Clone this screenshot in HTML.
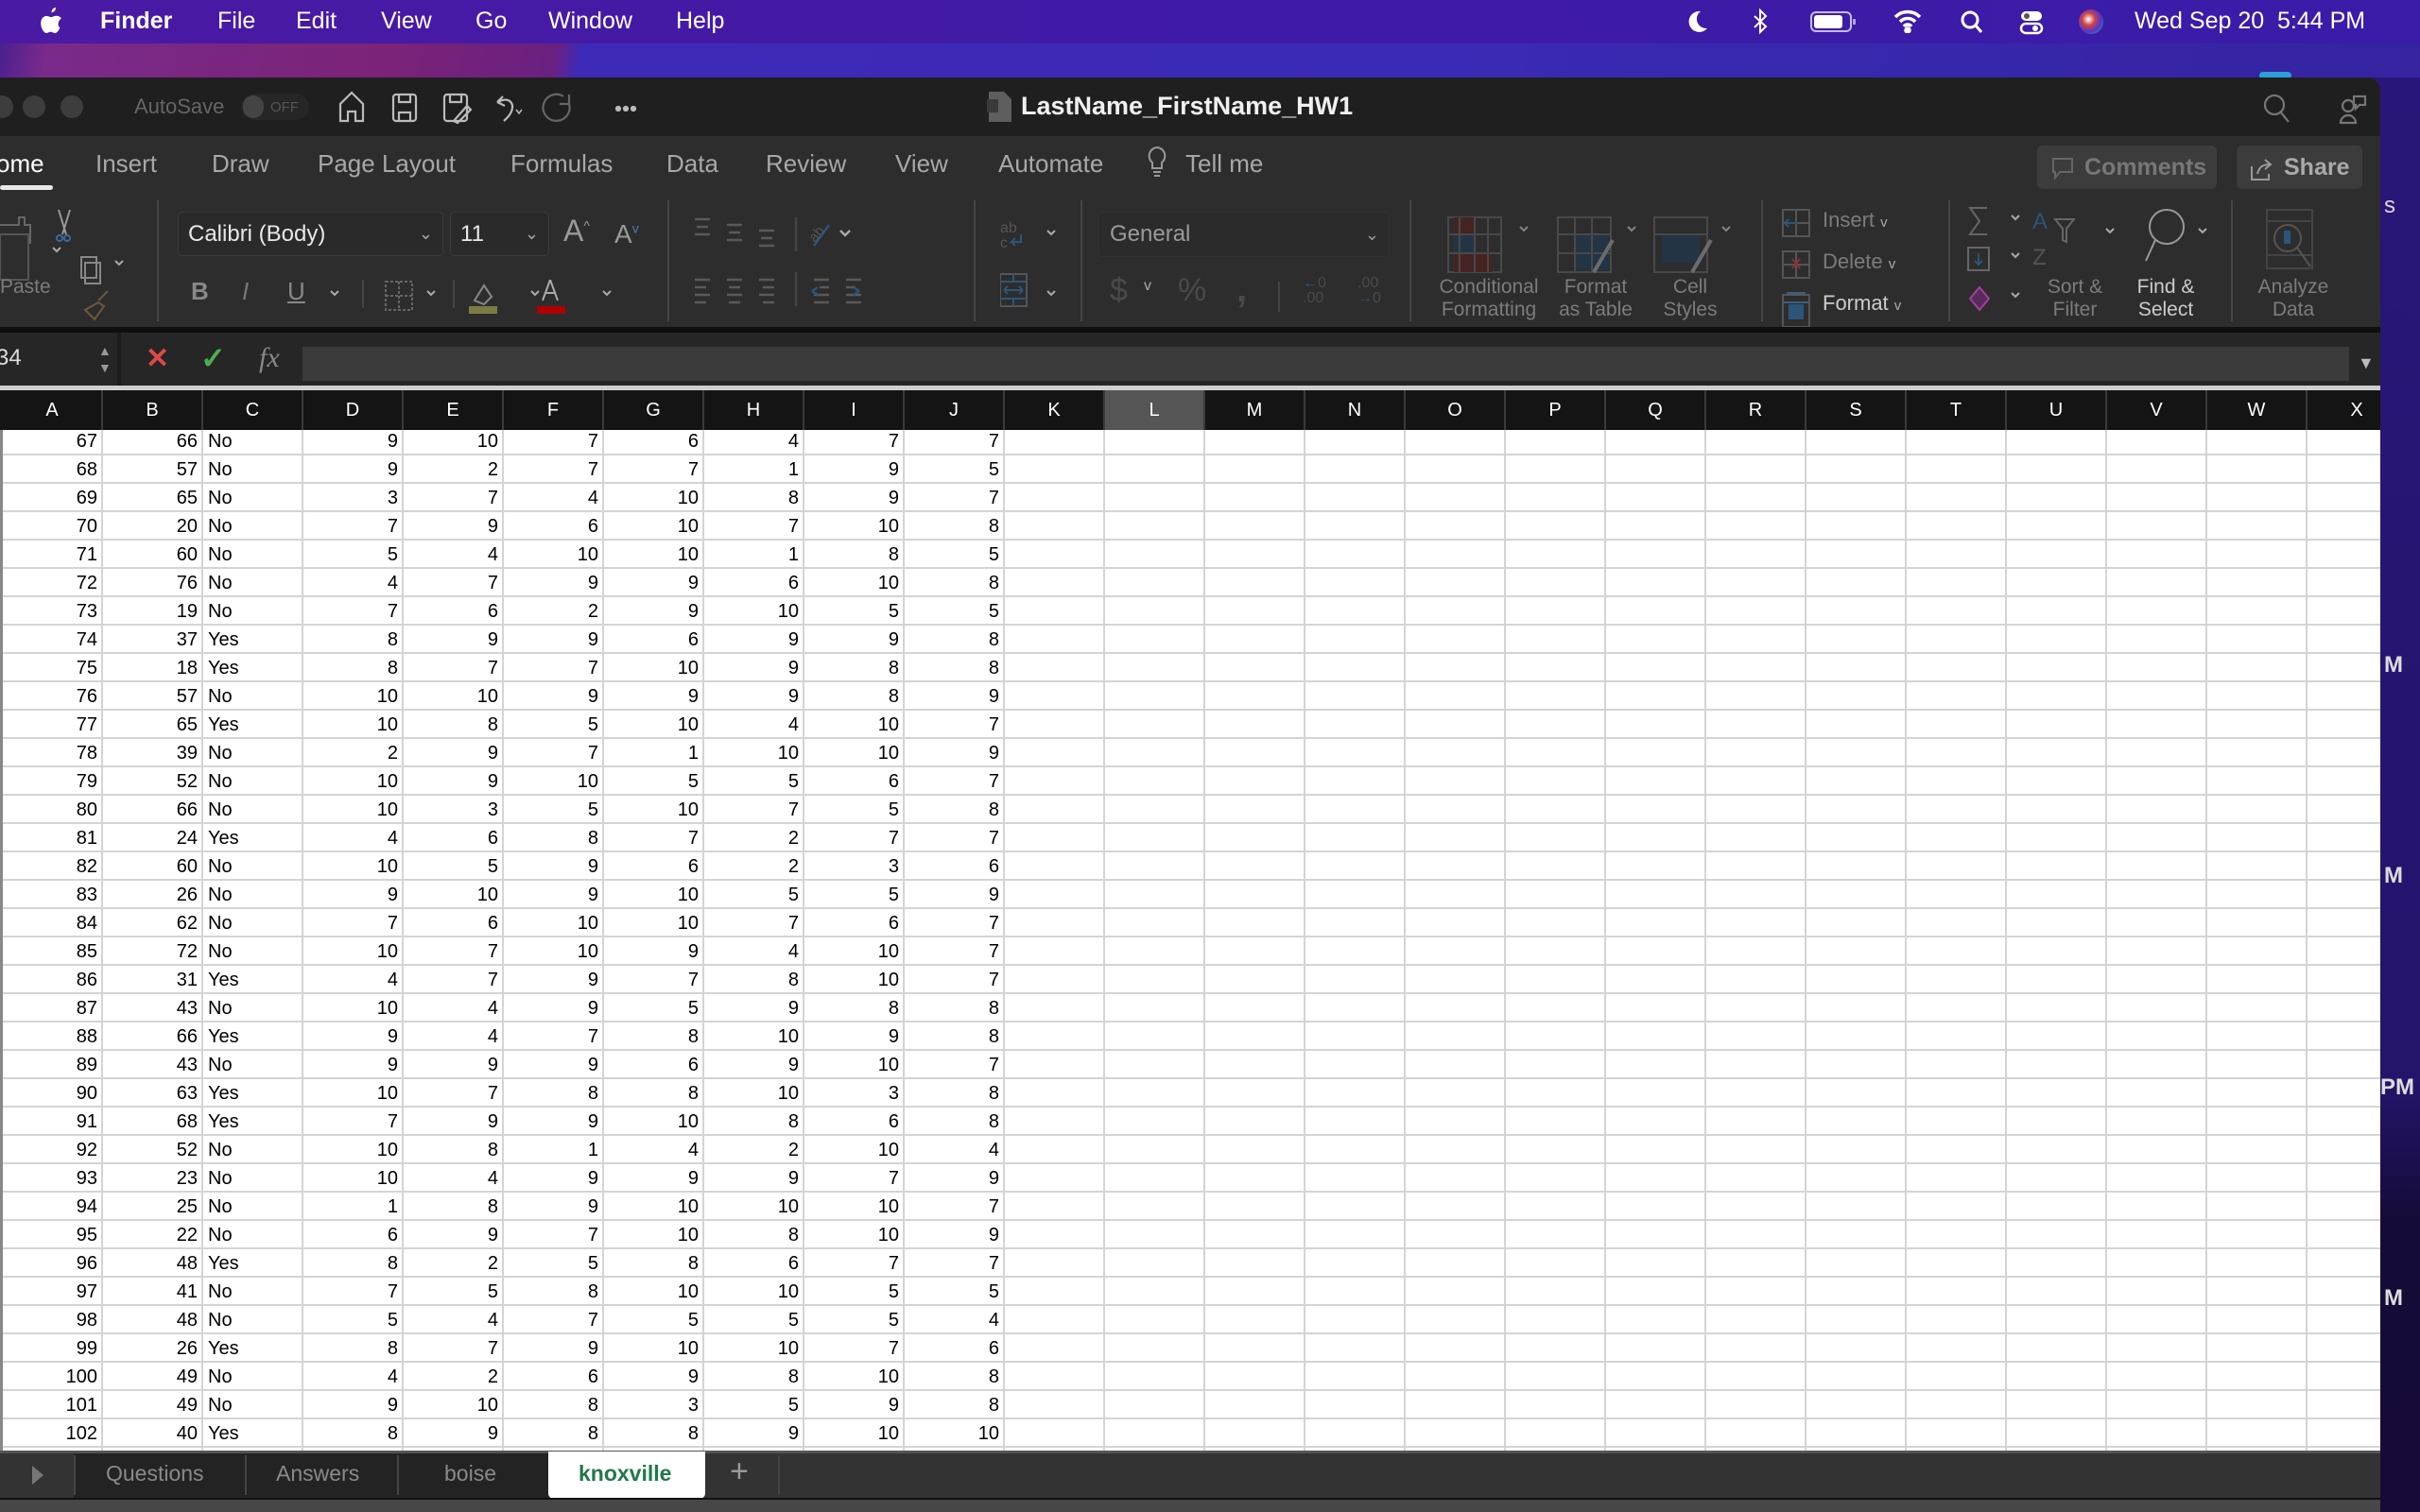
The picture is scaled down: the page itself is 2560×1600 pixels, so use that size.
<!DOCTYPE html>
<html><head><meta charset="utf-8"><style>
*{margin:0;padding:0;box-sizing:border-box}
body{width:2560px;height:1600px;overflow:hidden;position:relative;background:#2a1670;font-family:"Liberation Sans",sans-serif}
.a{position:absolute}
.menu{left:0;top:0;width:2560px;height:46px;background:linear-gradient(90deg,#4a1aa3,#3f1aa6 50%,#3a1ca8);color:#fff;font-size:25px}
.menu span{position:absolute;top:8px}
.desk{left:0;top:46px;width:2560px;height:36px;background:linear-gradient(100deg,#4a2090 0,#7a2a8a 2%,#7b2378 16%,#6a2080 23%,#3e2ab8 24%,#3a2ab5 60%,#3424a0 100%)}
.win{left:0;top:82px;width:2518px;height:1518px;background:#2d2d2d;overflow:hidden;border-top-right-radius:14px}
.title{left:0;top:0;width:2518px;height:62px;background:#1f1f1f}
.tabs span{position:absolute;top:76px;font-size:26px;color:#a8a8a8}
.lbl{position:absolute;font-size:21px;color:#7c7c7c;text-align:center;line-height:24px}
.sep{position:absolute;width:2px;background:#454545;top:130px;height:128px}
.r{position:absolute;left:3px;height:30px;display:flex;font-size:20px;line-height:34px;color:#000}
.r b{width:106px;text-align:right;padding-right:6px;font-weight:normal}
.r i{width:106px;text-align:left;padding-left:5px;font-style:normal}
.hd{position:absolute;top:331px;height:42px;width:106px;text-align:center;color:#fff;font-size:20px;line-height:42px;border-right:2px solid #3a3a3a}
.st{position:absolute;font-size:23px;color:#8a8a8a}
</style></head><body>
<div class="a menu">
<svg class="a" style="left:40px;top:6px" width="28" height="32" viewBox="0 0 28 32"><path fill="#fff" d="M19 2c0 3-2 5-4.5 5.2C14.3 4.4 16.5 2.2 19 2zM23.5 23c-1.3 3-3 6-5.3 6-2 0-2.5-1.2-4.7-1.2S11 29 9 29c-2.4 0-5.8-5-5.8-10.5 0-5 3.200-7.6 6-7.6 2.1 0 3.5 1.3 4.9 1.3 1.3 0 3-1.4 5.3-1.4 1 0 3.8.2 5.5 2.8-4.5 2.6-3.7 8.9-1.4 9.4z"/></svg>
<span style="left:106px;font-weight:bold">Finder</span>
<span style="left:230px">File</span><span style="left:313px">Edit</span><span style="left:403px">View</span><span style="left:503px">Go</span><span style="left:580px">Window</span><span style="left:715px">Help</span>
<svg class="a" style="left:1785px;top:10px" width="22" height="26"><path fill="#fff" d="M14 2a11 11 0 1 0 7 18A10 10 0 0 1 14 2z"/></svg>
<svg class="a" style="left:1853px;top:9px" width="18" height="28" fill="none" stroke="#fff" stroke-width="2"><path d="M3 8l12 11-6 6V2l6 6L3 20"/></svg>
<svg class="a" style="left:1915px;top:12px" width="50" height="22"><rect x="1" y="1" width="42" height="20" rx="5" fill="none" stroke="#fff" stroke-width="2" opacity=".7"/><rect x="4" y="4" width="30" height="14" rx="3" fill="#fff"/><rect x="45" y="8" width="3" height="6" fill="#fff" opacity=".6"/></svg>
<svg class="a" style="left:2002px;top:9px" width="32" height="26" fill="none" stroke="#fff" stroke-width="3.5"><path d="M3 9a18 18 0 0 1 26 0M8 14a11 11 0 0 1 16 0M12 19a5 5 0 0 1 8 0"/><circle cx="16" cy="23" r="2" fill="#fff"/></svg>
<svg class="a" style="left:2073px;top:10px" width="26" height="28" fill="none" stroke="#fff" stroke-width="3"><circle cx="11" cy="11" r="8"/><path d="M17 17l6 7"/></svg>
<svg class="a" style="left:2136px;top:10px" width="26" height="28"><rect x="2" y="2" width="22" height="10" rx="5" fill="#fff"/><rect x="2" y="15" width="22" height="10" rx="5" fill="none" stroke="#fff" stroke-width="2.5"/><circle cx="17" cy="20" r="3" fill="#fff"/><circle cx="8" cy="7" r="3" fill="#555"/></svg>
<div class="a" style="left:2199px;top:10px;width:26px;height:26px;border-radius:50%;background:radial-gradient(circle at 40% 40%,#fff 0,#c44 30%,#53c 60%,#2a8 90%)"></div>
<span style="left:2258px">Wed Sep 20&nbsp;&nbsp;5:44 PM</span>
</div>
<div class="a desk"></div>
<div class="a" style="left:2390px;top:76px;width:34px;height:8px;background:#2a9fd8;border-radius:4px"></div>
<div class="a" style="left:2518px;top:82px;width:42px;height:1518px;background:linear-gradient(#2a167a,#24146a 70%,#160a36 80%,#170a38)"></div>
<div class="a" style="left:2522px;top:204px;color:#ddd;font-size:24px">s</div>
<div class="a" style="left:2522px;top:690px;color:#ddd;font-size:24px;font-weight:bold">M</div>
<div class="a" style="left:2522px;top:913px;color:#ddd;font-size:24px;font-weight:bold">M</div>
<div class="a" style="left:2518px;top:1137px;color:#ddd;font-size:24px;font-weight:bold">PM</div>
<div class="a" style="left:2522px;top:1360px;color:#ddd;font-size:24px;font-weight:bold">M</div>

<div class="a win">
<div class="a title"></div>
<div class="a" style="left:-10px;top:19px;width:24px;height:24px;border-radius:50%;background:#3d3d3d"></div>
<div class="a" style="left:24px;top:19px;width:24px;height:24px;border-radius:50%;background:#3d3d3d"></div>
<div class="a" style="left:64px;top:19px;width:24px;height:24px;border-radius:50%;background:#3d3d3d"></div>
<div class="a" style="left:142px;top:18px;font-size:22px;color:#666">AutoSave</div>
<div class="a" style="left:255px;top:17px;width:72px;height:28px;border-radius:14px;background:#262626"></div>
<div class="a" style="left:257px;top:19px;width:22px;height:24px;border-radius:12px;background:#444"></div>
<div class="a" style="left:286px;top:23px;font-size:15px;color:#555">OFF</div>
<svg class="a" style="left:356px;top:12px" width="320" height="40" fill="none" stroke="#bbb" stroke-width="2.2">
<path d="M4 34V16L16 4l12 12v18h-8V24h-8v10z"/>
<rect x="60" y="6" width="24" height="28" rx="3"/><path d="M66 6v8h12V6M66 34v-9h12v9"/>
<rect x="114" y="6" width="24" height="28" rx="3"/><path d="M120 6v8h12V6M124 34l14-16 4 4-14 14z"/>
<path d="M170 14l6-6M170 14l8 4M171 14c10-6 18 0 14 10-2 5-6 8-8 10"/><path d="M190 22l3 4 3-4" stroke-width="1.5"/>
<path d="M240 8a14 14 0 1 0 6 8M246 6v10h-10" stroke="#666"/>
<circle cx="298" cy="21" r="2" fill="#bbb"/><circle cx="306" cy="21" r="2" fill="#bbb"/><circle cx="314" cy="21" r="2" fill="#bbb"/></svg>
<svg class="a" style="left:1042px;top:13px" width="30" height="36"><path d="M4 2h16l8 8v24H4z" fill="#5e5e5e"/><rect x="2" y="10" width="12" height="14" fill="#3a3a3a"/></svg>
<div class="a" style="left:1080px;top:15px;font-size:27px;font-weight:bold;color:#f0f0f0">LastName_FirstName_HW1</div>
<svg class="a" style="left:2392px;top:16px" width="120" height="36" fill="none" stroke="#777" stroke-width="2.2"><circle cx="14" cy="13" r="10"/><path d="M21 21l8 10"/><circle cx="92" cy="14" r="6"/><path d="M84 32a8 8 0 0 1 16 0zM98 4h12v9h-6l-4 4v-4h-2z"/></svg>

<div class="tabs">
<span style="left:-4px;color:#fff">ome</span><span style="left:101px">Insert</span><span style="left:224px">Draw</span><span style="left:336px">Page Layout</span><span style="left:540px">Formulas</span><span style="left:705px">Data</span><span style="left:810px">Review</span><span style="left:947px">View</span><span style="left:1056px">Automate</span><span style="left:1254px">Tell me</span>
</div>
<svg class="a" style="left:1212px;top:72px" width="24" height="40" fill="none" stroke="#999" stroke-width="2"><path d="M12 2a9 9 0 0 0-5 16v6h10v-6a9 9 0 0 0-5-16zM8 28h8M9 32h6"/></svg>
<div class="a" style="left:0;top:114px;width:56px;height:5px;background:#e8e8e8;border-radius:3px"></div>
<div class="a" style="left:2155px;top:72px;width:190px;height:46px;background:#3c3c3c;border-radius:6px;color:#777;font-size:25px;font-weight:bold;line-height:46px;padding-left:50px">Comments</div>
<svg class="a" style="left:2170px;top:84px" width="24" height="26" fill="none" stroke="#666" stroke-width="2"><path d="M2 2h20v14H9l-5 6v-6H2z"/></svg>
<div class="a" style="left:2366px;top:72px;width:133px;height:46px;background:#3c3c3c;border-radius:6px;color:#aaa;font-size:25px;font-weight:bold;line-height:46px;padding-left:50px">Share</div>
<svg class="a" style="left:2380px;top:84px" width="26" height="26" fill="none" stroke="#999" stroke-width="2"><path d="M2 10v14h18v-6M8 18c2-8 6-10 14-10M16 3l6 5-6 5"/></svg>

<!-- ribbon -->
<svg class="a" style="left:0;top:136px" width="140" height="200" fill="none" stroke="#666" stroke-width="2">
<path d="M0 20h20v-8h6v8h6v20"/><rect x="0" y="30" width="30" height="48" stroke="#555"/>
<path d="M92 4l8 26M104 4l-8 26" stroke="#999" transform="translate(-30,0)"/><circle cx="63" cy="34" r="3" stroke="#3a6aa0"/><circle cx="71" cy="34" r="3" stroke="#3a6aa0"/>
<rect x="86" y="54" width="16" height="22" stroke="#888"/><rect x="90" y="60" width="16" height="22" stroke="#888"/>
<path d="M90 110l10 10 10-14-6-4z" stroke="#6a5a3a"/><path d="M104 100l10-10" stroke="#6a5a3a"/>
<path d="M56 44l4 4 4-4M122 58l4 4 4-4" stroke="#aaa"/></svg>
<div class="lbl" style="left:0;top:210px">Paste</div>
<div class="sep" style="left:166px"></div>
<div class="a" style="left:188px;top:142px;width:281px;height:47px;background:#2a2a2a;border:1px solid #3a3a3a;border-radius:5px;color:#e8e8e8;font-size:24px;line-height:45px;padding-left:10px">Calibri (Body)<span style="position:absolute;right:10px;color:#aaa;font-size:18px">⌄</span></div>
<div class="a" style="left:476px;top:142px;width:105px;height:47px;background:#2a2a2a;border:1px solid #3a3a3a;border-radius:5px;color:#e8e8e8;font-size:24px;line-height:45px;padding-left:10px">11<span style="position:absolute;right:10px;color:#aaa;font-size:18px">⌄</span></div>
<div class="a" style="left:596px;top:144px;font-size:32px;color:#999">A<sup style="font-size:14px">^</sup></div>
<div class="a" style="left:650px;top:150px;font-size:28px;color:#999">A<sup style="font-size:14px;color:#4a7ab0">v</sup></div>
<div class="a" style="left:202px;top:211px;font-size:26px;color:#888;font-weight:bold">B</div>
<div class="a" style="left:256px;top:211px;font-size:26px;color:#777;font-style:italic">I</div>
<div class="a" style="left:304px;top:211px;font-size:26px;color:#888;text-decoration:underline">U</div>
<svg class="a" style="left:340px;top:214px" width="330" height="40" fill="none" stroke="#666" stroke-width="2">
<path d="M10 12l4 4 4-4M112 12l4 4 4-4M222 12l4 4 4-4M298 12l4 4 4-4" stroke="#aaa"/>
<rect x="68" y="2" width="28" height="30" stroke-dasharray="3 2"/><path d="M82 2v30M68 17h28" stroke-dasharray="3 2"/>
<path d="M44 0v30M140 0v30" stroke="#444"/>
<path d="M162 22l10-16 8 12-8 8z" stroke="#888"/><rect x="156" y="28" width="30" height="8" fill="#7d7b45" stroke="none"/>
<path d="M234 22l8-22 8 22M237 14h10" stroke="#aaa"/><rect x="228" y="28" width="30" height="8" fill="#b00000" stroke="none"/></svg>
<div class="sep" style="left:706px"></div>
<svg class="a" style="left:735px;top:148px" width="300" height="110" fill="none" stroke="#5a5a5a" stroke-width="2.5">
<path d="M0 2h16M2 10h12M0 18h16M34 8h16M36 16h12M34 24h16M68 14h16M70 22h12M68 30h16"/>
<path d="M0 66h16M0 74h12M0 82h16M0 90h12M34 66h16M36 74h12M34 82h16M36 90h12M68 66h16M72 74h12M68 82h16M72 90h12"/>
<path d="M107 0v36M107 58v36" stroke="#444"/>
<path d="M126 66h16M132 74h10M126 82h16M126 90h16M160 66h16M160 74h10M160 82h16M160 90h16" />
<path d="M124 78l6-4M124 78l6 4M174 78l-6-4M174 78l-6 4" stroke="#2c5578"/>
<path d="M126 30l16-22" stroke="#2c5578"/><text x="118" y="24" fill="#555" stroke="none" font-size="15" transform="rotate(-50 126 16)">ab</text>
<path d="M154 14l5 5 5-5" stroke="#aaa"/></svg>
<div class="sep" style="left:1030px"></div>
<svg class="a" style="left:1058px;top:150px" width="80" height="110" fill="none" stroke="#555" stroke-width="2">
<text x="0" y="14" fill="#555" stroke="none" font-size="16">ab</text><text x="0" y="30" fill="#555" stroke="none" font-size="16">c</text><path d="M22 16v8h-10l4-4M12 24l4 4" stroke="#2c5578"/>
<path d="M50 12l4 4 4-4M50 76l4 4 4-4" stroke="#aaa"/>
<rect x="0" y="58" width="28" height="34"/><path d="M0 66h28M0 84h28M14 58v8M14 84v8M4 75h20M4 75l4-4M4 75l4 4M24 75l-4-4M24 75l-4 4" stroke="#2c5578"/></svg>
<div class="sep" style="left:1143px"></div>
<div class="a" style="left:1161px;top:142px;width:309px;height:48px;background:#2b2b2b;border:1px solid #333;border-radius:5px;color:#9a9a9a;font-size:24px;line-height:46px;padding-left:12px">General<span style="position:absolute;right:10px;font-size:18px">⌄</span></div>
<div class="a" style="left:1174px;top:206px;font-size:34px;color:#4a4a4a">$</div>
<div class="a" style="left:1210px;top:212px;font-size:16px;color:#aaa">v</div>
<div class="a" style="left:1246px;top:206px;font-size:34px;color:#4a4a4a">%</div>
<div class="a" style="left:1308px;top:202px;font-size:40px;color:#4a4a4a;font-weight:bold">,</div>
<div class="a" style="left:1352px;top:216px;width:2px;height:32px;background:#444"></div>
<div class="a" style="left:1378px;top:210px;font-size:16px;line-height:16px;color:#4a4a4a"><span style="color:#2c5578">←</span>0<br>.00</div>
<div class="a" style="left:1436px;top:210px;font-size:16px;line-height:16px;color:#4a4a4a">.00<br><span style="color:#2c5578">→</span>0</div>
<div class="sep" style="left:1491px"></div>
<svg class="a" style="left:1530px;top:142px;opacity:.7" width="340" height="70" fill="none" stroke="#555" stroke-width="2">
<rect x="2" y="6" width="56" height="58"/><rect x="8" y="6" width="22" height="18" fill="#502020" stroke="none"/><rect x="8" y="44" width="40" height="20" fill="#502020" stroke="none"/><rect x="8" y="24" width="22" height="20" fill="#203850" stroke="none"/><path d="M2 24h56M2 44h56M14 6v58M30 6v58M44 6v58"/>
<path d="M78 16l4 4 4-4M192 16l4 4 4-4M292 16l4 4 4-4" stroke="#aaa"/>
<rect x="118" y="6" width="56" height="58"/><rect x="136" y="24" width="36" height="38" fill="#203850" stroke="none"/><path d="M118 24h56M118 44h56M136 6v58M154 6v58"/><path d="M176 30l-20 34" stroke="#888" stroke-width="4"/>
<rect x="220" y="6" width="56" height="58"/><rect x="228" y="24" width="40" height="30" fill="#203850" stroke="none"/><path d="M220 24h56"/><path d="M280 30l-20 34" stroke="#888" stroke-width="4"/></svg>
<div class="lbl" style="left:1510px;top:210px;width:130px">Conditional<br>Formatting</div>
<div class="lbl" style="left:1640px;top:210px;width:96px">Format<br>as Table</div>
<div class="lbl" style="left:1740px;top:210px;width:96px">Cell<br>Styles</div>
<div class="sep" style="left:1863px"></div>
<svg class="a" style="left:1884px;top:138px" width="34" height="130" fill="none" stroke="#555" stroke-width="2">
<rect x="2" y="2" width="28" height="28"/><path d="M2 16h28M16 2v28"/><path d="M4 16h14M4 16l4-4M4 16l4 4" stroke="#2c5578"/>
<rect x="2" y="46" width="28" height="28"/><path d="M2 60h28M16 46v28"/><path d="M12 54l8 10M20 54l-8 10" stroke="#903030"/>
<rect x="2" y="92" width="28" height="34"/><rect x="8" y="102" width="16" height="16" fill="#2c5578" stroke="none"/><path d="M2 100h28M6 90h20" stroke="#3a6080"/></svg>
<div class="a" style="left:1928px;top:138px;font-size:22px;color:#7c7c7c">Insert <span style="font-size:15px;color:#aaa">v</span></div>
<div class="a" style="left:1928px;top:182px;font-size:22px;color:#7c7c7c">Delete <span style="font-size:15px;color:#aaa">v</span></div>
<div class="a" style="left:1928px;top:226px;font-size:22px;color:#ccc">Format <span style="font-size:15px;color:#aaa">v</span></div>
<div class="sep" style="left:2061px"></div>
<svg class="a" style="left:2080px;top:136px" width="280" height="140" fill="none" stroke="#666" stroke-width="2">
<path d="M22 2H4l10 14-10 14h18"/><path d="M48 10l4 4 4-4M48 50l4 4 4-4M48 92l4 4 4-4M148 24l4 4 4-4M246 24l4 4 4-4" stroke="#aaa"/>
<rect x="2" y="44" width="22" height="24"/><path d="M13 50v12M9 58l4 4 4-4" stroke="#2c5578"/>
<path d="M14 86l-10 12 10 12 10-12z" stroke="#a040a0" fill="#5a2a5a"/>
<text x="70" y="24" fill="#2c5578" stroke="none" font-size="24">A</text><text x="70" y="62" fill="#555" stroke="none" font-size="24">Z</text><path d="M94 14h20l-8 10v14l-4-2V24z"/>
<circle cx="212" cy="22" r="18" stroke="#999"/><path d="M200 36l-10 22" stroke="#999"/></svg>
<div class="lbl" style="left:2150px;top:210px;width:90px">Sort &amp;<br>Filter</div>
<div class="lbl" style="left:2246px;top:210px;width:90px;color:#ccc">Find &amp;<br>Select</div>
<div class="sep" style="left:2360px"></div>
<svg class="a" style="left:2396px;top:138px" width="60" height="70" fill="none" stroke="#444" stroke-width="2"><rect x="2" y="2" width="48" height="62"/><path d="M2 14h48M2 50h48"/><circle cx="24" cy="32" r="14" stroke="#555"/><path d="M34 42l14 20" stroke="#555"/><rect x="20" y="24" width="7" height="14" fill="#2c5578" stroke="none"/></svg>
<div class="lbl" style="left:2376px;top:210px;width:100px">Analyze<br>Data</div>

<div class="a" style="left:0;top:264px;width:2518px;height:6px;background:#0e0e0e"></div>
<div class="a" style="left:0;top:270px;width:2518px;height:58px;background:#262626"></div>
<div class="a" style="left:124px;top:270px;width:4px;height:58px;background:#1c1c1c"></div>
<div class="a" style="left:-4px;top:283px;font-size:24px;color:#ddd">34</div>
<div class="a" style="left:104px;top:280px;font-size:14px;color:#999;line-height:18px">▲<br>▼</div>
<div class="a" style="left:154px;top:280px;font-size:30px;color:#e04848;font-weight:bold">✕</div>
<div class="a" style="left:212px;top:278px;font-size:32px;color:#4caf50;font-weight:bold">✓</div>
<div class="a" style="left:274px;top:280px;font-size:30px;color:#888;font-style:italic;font-family:'Liberation Serif',serif">fx</div>
<div class="a" style="left:320px;top:285px;width:2165px;height:36px;background:#3b3b3b"></div>
<div class="a" style="left:2494px;top:292px;font-size:18px;color:#bbb">▼</div>
<div class="a" style="left:0;top:326px;width:2518px;height:5px;background:#cfcfcf"></div>
<div class="a" style="left:0;top:331px;width:2518px;height:42px;background:#141414"></div>
<div class="hd" style="left:3px">A</div><div class="hd" style="left:109px">B</div><div class="hd" style="left:215px">C</div><div class="hd" style="left:321px">D</div><div class="hd" style="left:427px">E</div><div class="hd" style="left:533px">F</div><div class="hd" style="left:639px">G</div><div class="hd" style="left:745px">H</div><div class="hd" style="left:851px">I</div><div class="hd" style="left:957px">J</div><div class="hd" style="left:1063px">K</div><div class="hd" style="left:1169px;background:#555">L</div><div class="hd" style="left:1275px">M</div><div class="hd" style="left:1381px">N</div><div class="hd" style="left:1487px">O</div><div class="hd" style="left:1593px">P</div><div class="hd" style="left:1699px">Q</div><div class="hd" style="left:1805px">R</div><div class="hd" style="left:1911px">S</div><div class="hd" style="left:2017px">T</div><div class="hd" style="left:2123px">U</div><div class="hd" style="left:2229px">V</div><div class="hd" style="left:2335px">W</div><div class="hd" style="left:2441px">X</div>

<div class="a" style="left:0;top:373px;width:2518px;height:1080px;background:#fff;overflow:hidden">
<div class="a" style="left:3px;top:-3px;width:2515px;height:1090px;background:repeating-linear-gradient(to bottom,transparent 0 28px,#d4d4d4 28px 30px),repeating-linear-gradient(to right,transparent 0 104px,#d4d4d4 104px 106px)"></div>
<div class="a" style="left:0;top:0;width:3px;height:1080px;background:#888"></div>
</div>
<div style="position:absolute;left:0;top:-82px">
<div class="r" style="top:450px"><b>67</b><b>66</b><i>No</i><b>9</b><b>10</b><b>7</b><b>6</b><b>4</b><b>7</b><b>7</b></div>
<div class="r" style="top:480px"><b>68</b><b>57</b><i>No</i><b>9</b><b>2</b><b>7</b><b>7</b><b>1</b><b>9</b><b>5</b></div>
<div class="r" style="top:510px"><b>69</b><b>65</b><i>No</i><b>3</b><b>7</b><b>4</b><b>10</b><b>8</b><b>9</b><b>7</b></div>
<div class="r" style="top:540px"><b>70</b><b>20</b><i>No</i><b>7</b><b>9</b><b>6</b><b>10</b><b>7</b><b>10</b><b>8</b></div>
<div class="r" style="top:570px"><b>71</b><b>60</b><i>No</i><b>5</b><b>4</b><b>10</b><b>10</b><b>1</b><b>8</b><b>5</b></div>
<div class="r" style="top:600px"><b>72</b><b>76</b><i>No</i><b>4</b><b>7</b><b>9</b><b>9</b><b>6</b><b>10</b><b>8</b></div>
<div class="r" style="top:630px"><b>73</b><b>19</b><i>No</i><b>7</b><b>6</b><b>2</b><b>9</b><b>10</b><b>5</b><b>5</b></div>
<div class="r" style="top:660px"><b>74</b><b>37</b><i>Yes</i><b>8</b><b>9</b><b>9</b><b>6</b><b>9</b><b>9</b><b>8</b></div>
<div class="r" style="top:690px"><b>75</b><b>18</b><i>Yes</i><b>8</b><b>7</b><b>7</b><b>10</b><b>9</b><b>8</b><b>8</b></div>
<div class="r" style="top:720px"><b>76</b><b>57</b><i>No</i><b>10</b><b>10</b><b>9</b><b>9</b><b>9</b><b>8</b><b>9</b></div>
<div class="r" style="top:750px"><b>77</b><b>65</b><i>Yes</i><b>10</b><b>8</b><b>5</b><b>10</b><b>4</b><b>10</b><b>7</b></div>
<div class="r" style="top:780px"><b>78</b><b>39</b><i>No</i><b>2</b><b>9</b><b>7</b><b>1</b><b>10</b><b>10</b><b>9</b></div>
<div class="r" style="top:810px"><b>79</b><b>52</b><i>No</i><b>10</b><b>9</b><b>10</b><b>5</b><b>5</b><b>6</b><b>7</b></div>
<div class="r" style="top:840px"><b>80</b><b>66</b><i>No</i><b>10</b><b>3</b><b>5</b><b>10</b><b>7</b><b>5</b><b>8</b></div>
<div class="r" style="top:870px"><b>81</b><b>24</b><i>Yes</i><b>4</b><b>6</b><b>8</b><b>7</b><b>2</b><b>7</b><b>7</b></div>
<div class="r" style="top:900px"><b>82</b><b>60</b><i>No</i><b>10</b><b>5</b><b>9</b><b>6</b><b>2</b><b>3</b><b>6</b></div>
<div class="r" style="top:930px"><b>83</b><b>26</b><i>No</i><b>9</b><b>10</b><b>9</b><b>10</b><b>5</b><b>5</b><b>9</b></div>
<div class="r" style="top:960px"><b>84</b><b>62</b><i>No</i><b>7</b><b>6</b><b>10</b><b>10</b><b>7</b><b>6</b><b>7</b></div>
<div class="r" style="top:990px"><b>85</b><b>72</b><i>No</i><b>10</b><b>7</b><b>10</b><b>9</b><b>4</b><b>10</b><b>7</b></div>
<div class="r" style="top:1020px"><b>86</b><b>31</b><i>Yes</i><b>4</b><b>7</b><b>9</b><b>7</b><b>8</b><b>10</b><b>7</b></div>
<div class="r" style="top:1050px"><b>87</b><b>43</b><i>No</i><b>10</b><b>4</b><b>9</b><b>5</b><b>9</b><b>8</b><b>8</b></div>
<div class="r" style="top:1080px"><b>88</b><b>66</b><i>Yes</i><b>9</b><b>4</b><b>7</b><b>8</b><b>10</b><b>9</b><b>8</b></div>
<div class="r" style="top:1110px"><b>89</b><b>43</b><i>No</i><b>9</b><b>9</b><b>9</b><b>6</b><b>9</b><b>10</b><b>7</b></div>
<div class="r" style="top:1140px"><b>90</b><b>63</b><i>Yes</i><b>10</b><b>7</b><b>8</b><b>8</b><b>10</b><b>3</b><b>8</b></div>
<div class="r" style="top:1170px"><b>91</b><b>68</b><i>Yes</i><b>7</b><b>9</b><b>9</b><b>10</b><b>8</b><b>6</b><b>8</b></div>
<div class="r" style="top:1200px"><b>92</b><b>52</b><i>No</i><b>10</b><b>8</b><b>1</b><b>4</b><b>2</b><b>10</b><b>4</b></div>
<div class="r" style="top:1230px"><b>93</b><b>23</b><i>No</i><b>10</b><b>4</b><b>9</b><b>9</b><b>9</b><b>7</b><b>9</b></div>
<div class="r" style="top:1260px"><b>94</b><b>25</b><i>No</i><b>1</b><b>8</b><b>9</b><b>10</b><b>10</b><b>10</b><b>7</b></div>
<div class="r" style="top:1290px"><b>95</b><b>22</b><i>No</i><b>6</b><b>9</b><b>7</b><b>10</b><b>8</b><b>10</b><b>9</b></div>
<div class="r" style="top:1320px"><b>96</b><b>48</b><i>Yes</i><b>8</b><b>2</b><b>5</b><b>8</b><b>6</b><b>7</b><b>7</b></div>
<div class="r" style="top:1350px"><b>97</b><b>41</b><i>No</i><b>7</b><b>5</b><b>8</b><b>10</b><b>10</b><b>5</b><b>5</b></div>
<div class="r" style="top:1380px"><b>98</b><b>48</b><i>No</i><b>5</b><b>4</b><b>7</b><b>5</b><b>5</b><b>5</b><b>4</b></div>
<div class="r" style="top:1410px"><b>99</b><b>26</b><i>Yes</i><b>8</b><b>7</b><b>9</b><b>10</b><b>10</b><b>7</b><b>6</b></div>
<div class="r" style="top:1440px"><b>100</b><b>49</b><i>No</i><b>4</b><b>2</b><b>6</b><b>9</b><b>8</b><b>10</b><b>8</b></div>
<div class="r" style="top:1470px"><b>101</b><b>49</b><i>No</i><b>9</b><b>10</b><b>8</b><b>3</b><b>5</b><b>9</b><b>8</b></div>
<div class="r" style="top:1500px"><b>102</b><b>40</b><i>Yes</i><b>8</b><b>9</b><b>8</b><b>8</b><b>9</b><b>10</b><b>10</b></div>
</div>
<div class="a" style="left:0;top:1453px;width:2518px;height:3px;background:#555"></div>
<div class="a" style="left:0;top:1456px;width:2518px;height:47px;background:#333"></div>
<div class="a" style="left:78px;top:1456px;width:502px;height:47px;background:#232323"></div>
<div class="a" style="left:78px;top:1458px;width:2px;height:42px;background:#444"></div>
<div class="a" style="left:259px;top:1458px;width:2px;height:42px;background:#444"></div>
<div class="a" style="left:420px;top:1458px;width:2px;height:42px;background:#444"></div>
<div class="a" style="left:823px;top:1458px;width:2px;height:42px;background:#444"></div>
<div class="a" style="left:34px;top:1469px;width:0;height:0;border-left:12px solid #777;border-top:10px solid transparent;border-bottom:10px solid transparent"></div>
<div class="a" style="left:580px;top:1454px;width:166px;height:50px;background:#fff;border-radius:0 0 6px 6px"></div>
<div class="st" style="left:112px;top:1464px">Questions</div>
<div class="st" style="left:292px;top:1464px">Answers</div>
<div class="st" style="left:470px;top:1464px">boise</div>
<div class="st" style="left:612px;top:1464px;color:#1f7a45;font-weight:bold">knoxville</div>
<div class="st" style="left:772px;top:1456px;font-size:34px;color:#999">+</div>
<div class="a" style="left:0;top:1503px;width:2518px;height:2px;background:#111"></div>
<div class="a" style="left:0;top:1505px;width:2518px;height:20px;background:#474747"></div>
</div>
</body></html>
